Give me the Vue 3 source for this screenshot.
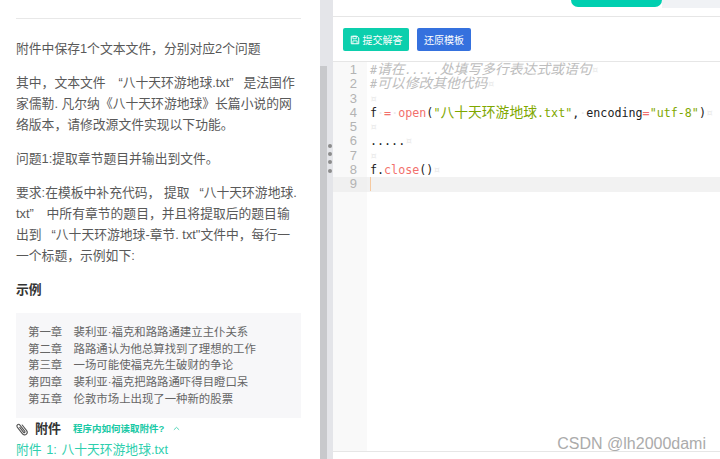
<template>
  <div class="page">
    <section class="question">
      <div class="top-rule"></div>
      <p class="first">附件中保存1个文本文件，分别对应2个问题</p>
      <p>其中，文本文件　“八十天环游地球.txt”&ensp; 是法国作家儒勒. 凡尔纳《八十天环游地球》长篇小说的网络版本，请修改源文件实现以下功能。</p>
      <p>问题1:提取章节题目并输出到文件。</p>
      <p>要求:在模板中补充代码， 提取&ensp; “八十天环游地球.<br />txt”　中所有章节的题目，并且将提取后的题目输出到&ensp; “八十天环游地球-章节. txt"文件中，每行一一个标题，示例如下:</p>
      <h4>示例</h4>
      <div class="sample">
        <div v-for="row in chapters" :key="row">{{ row }}</div>
      </div>
      <div class="attach-head">
        <svg class="clip" viewBox="0 0 12 14" width="12" height="14">
          <path d="M8.6 4v7.2a2.6 2.6 0 0 1-5.2 0V2.6a1.7 1.7 0 0 1 3.4 0v8a.8.8 0 0 1-1.6 0V4.4" transform="rotate(-38 6 7)" fill="none" stroke="#555" stroke-width="1.1" stroke-linecap="round" />
        </svg>
        <strong>附件</strong>
        <a class="how">程序内如何读取附件?</a>
        <svg class="chev" viewBox="0 0 8 5" width="7" height="5">
          <path d="M1 4 4 1.2 7 4" fill="none" stroke="#3fd0b0" stroke-width="1" />
        </svg>
      </div>
      <a class="file">附件 1: 八十天环游地球.txt</a>
    </section>

    <div class="scrollbar"><div class="thumb"></div></div>

    <div class="splitter">
      <i v-for="n in 4" :key="n"></i>
    </div>

    <section class="workspace">
      <div class="tabs">
        <div class="tab-active"></div>
        <div class="tab-rest"></div>
      </div>
      <div class="toolbar">
        <button class="btn green">
          <svg viewBox="0 0 12 12" width="10" height="10">
            <path d="M1.5 1.5h7l2 2v7h-9z" fill="none" stroke="#fff" stroke-width="1.2" />
            <path d="M3.5 1.5h4v3h-4zM3.5 10.5v-3.5h5v3.5" fill="none" stroke="#fff" stroke-width="1" />
          </svg>
          提交解答
        </button>
        <button class="btn blue">还原模板</button>
      </div>
      <div class="editor">
        <div class="gutter">
          <div v-for="n in 9" :key="n" class="num" :class="{ on: n === 9 }">{{ n }}</div>
        </div>
        <div class="code">
          <div class="line comment"><span>#</span><span class="zh">请在</span><span>.....</span><span class="zh">处填写多行表达式或语句</span><span class="inv">¤</span></div>
          <div class="line comment"><span>#</span><span class="zh">可以修改其他代码</span><span class="inv">¤</span></div>
          <div class="line"><span class="inv">¤</span></div>
          <div class="line">f<span class="inv">·</span><span class="op">=</span><span class="inv">·</span><span class="fn">open</span>(<span class="str">"<span class="zh">八十天环游地球</span>.txt"</span>,<span class="inv">·</span>encoding<span class="op">=</span><span class="str">"utf-8"</span>)<span class="inv">¤</span></div>
          <div class="line"><span class="inv">¤</span></div>
          <div class="line">.....<span class="inv">¤</span></div>
          <div class="line"><span class="inv">¤</span></div>
          <div class="line">f.<span class="fn">close</span>()<span class="inv">¤</span></div>
          <div class="line active"><span class="cursor"></span></div>
        </div>
      </div>
      <div class="watermark">CSDN @lh2000dami</div>
    </section>
  </div>
</template>

<script setup>
  const chapters = [
    '第一章　裴利亚·福克和路路通建立主仆关系',
    '第二章　路路通认为他总算找到了理想的工作',
    '第三章　一场可能使福克先生破财的争论',
    '第四章　裴利亚·福克把路路通吓得目瞪口呆',
    '第五章　伦敦市场上出现了一种新的股票',
  ]
</script>

<style>
  html,
  body {
    margin: 0;
    background: #fff;
  }
</style>

<style scoped>
  .page {
    display: flex;
    width: 720px;
    height: 459px;
    overflow: hidden;
    font-family: "Liberation Sans", "Noto Sans CJK SC", sans-serif;
  }

  .question {
    width: 320px;
    height: 459px;
    flex: none;
    box-sizing: border-box;
    padding: 0 19px 0 16px;
    overflow: hidden;
    color: #595959;
    font-size: 12.8px;
    line-height: 21px;
  }

  .top-rule {
    height: 18px;
    border-bottom: 1px solid #e8e8e8;
  }

  .question p {
    margin: 0 0 13px;
  }

  .question p.first {
    margin-top: 19px;
  }

  .question h4 {
    margin: 0;
    color: #333;
    font-size: 12.8px;
    line-height: 21px;
    font-weight: 700;
  }

  .sample {
    height: 105px;
    box-sizing: border-box;
    margin-top: 13px;
    padding: 11px 12px 0;
    background: #f7f7f9;
    color: #666;
    font-size: 11.4px;
    line-height: 16.7px;
    white-space: nowrap;
  }

  .attach-head {
    display: flex;
    align-items: center;
    height: 21px;
  }

  .clip {
    flex: none;
    margin-right: 7px;
    overflow: visible;
  }

  .attach-head strong {
    color: #333;
    font-size: 13px;
    margin-right: 12px;
  }

  .how {
    color: #19c9a5;
    font-size: 9.5px;
    font-weight: 700;
    margin-right: 9px;
  }

  .chev {
    flex: none;
  }

  .file {
    display: block;
    color: #2fcfae;
    font-size: 12.8px;
    line-height: 21px;
    word-spacing: 1px;
    white-space: nowrap;
  }

  .scrollbar {
    width: 7px;
    height: 459px;
    flex: none;
    padding-top: 66px;
    box-sizing: border-box;
    background: #e4e5e9;
  }

  .thumb {
    height: 100%;
    background: #c8c9cc;
  }

  .splitter {
    width: 6px;
    height: 459px;
    flex: none;
    box-sizing: border-box;
    padding-top: 144px;
    background: #e4e5e9;
    display: flex;
    flex-direction: column;
    align-items: center;
    gap: 4.2px;
  }

  .splitter i {
    width: 4px;
    height: 4px;
    border-radius: 50%;
    background: #8c8c8c;
    flex: none;
  }

  .workspace {
    position: relative;
    flex: 1;
    min-width: 0;
    height: 459px;
    display: flex;
    flex-direction: column;
  }

  .tabs {
    height: 16px;
    flex: none;
    box-sizing: content-box;
    border-bottom: 1px solid #e6e6e6;
    display: flex;
    justify-content: flex-end;
    align-items: flex-start;
  }

  .tab-active {
    width: 91px;
    height: 7px;
    background: #00cfb0;
    border-radius: 0 0 18px 18px;
  }

  .tab-rest {
    width: 58px;
    height: 8px;
    background: #f0f2f5;
  }

  .toolbar {
    height: 45px;
    flex: none;
    box-sizing: border-box;
    padding: 11px 0 0 10px;
    display: flex;
    gap: 8px;
    align-items: flex-start;
    border-bottom: 1px solid #e6e6e6;
  }

  .btn {
    display: flex;
    align-items: center;
    justify-content: center;
    gap: 3px;
    height: 23px;
    padding: 0;
    border: 0;
    border-radius: 2px;
    color: #fff;
    font-family: inherit;
    font-size: 10px;
  }

  .btn.green {
    width: 66px;
    background: #0ccfad;
  }

  .btn.blue {
    width: 54px;
    background: #3571de;
  }

  .editor {
    display: flex;
    height: 390px;
    flex: none;
    box-sizing: border-box;
    border-bottom: 1px solid #e6e6e6;
  }

  .gutter {
    width: 34px;
    flex: none;
    padding-top: 1px;
    background: #f9f9f9;
  }

  .num {
    height: 14.3px;
    line-height: 14.3px;
    padding-right: 10px;
    text-align: right;
    color: #b3b3b3;
    font-family: "Liberation Sans", sans-serif;
    font-size: 13px;
  }

  .num.on {
    background: #f0f0f0;
  }

  .code {
    flex: 1;
    min-width: 0;
    padding-top: 1px;
    color: #222;
    font-family: "DejaVu Sans Mono", monospace;
    font-size: 11.7px;
  }

  .line {
    height: 14.3px;
    line-height: 14.3px;
    padding-left: 3px;
    white-space: pre;
  }

  .line.active {
    background: #f2f2f2;
  }

  .cursor {
    display: inline-block;
    width: 1px;
    height: 14px;
    background: #f5c9a0;
    vertical-align: top;
  }

  .zh {
    font-family: "Noto Sans CJK SC", sans-serif;
    font-size: 13.8px;
    line-height: 0;
  }

  .comment {
    color: #bdbdbd;
    font-style: italic;
  }

  .inv {
    color: #eaeaea;
    font-style: normal;
  }

  .op,
  .fn {
    color: #f2706c;
  }

  .str {
    color: #7fa800;
  }

  .watermark {
    position: absolute;
    right: 14px;
    bottom: 6px;
    color: #ababab;
    font-family: "Liberation Sans", sans-serif;
    font-size: 16px;
    line-height: 18px;
  }
</style>
